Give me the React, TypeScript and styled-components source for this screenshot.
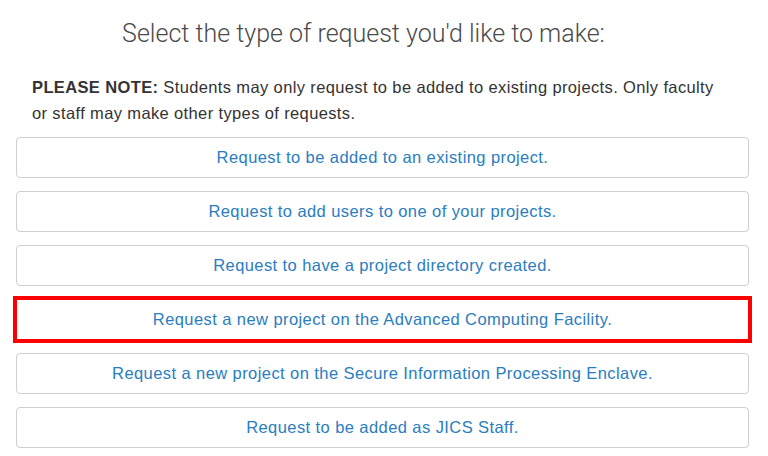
import React from "react";
import styled, { createGlobalStyle } from "styled-components";

const Global = createGlobalStyle`
  html, body { margin: 0; padding: 0; background: #ffffff; }
  body { font-family: "Liberation Sans", Arial, sans-serif; }
`;

const Page = styled.div`
  width: 768px;
  height: 456px;
  box-sizing: border-box;
  padding: 16px 19px 0 16px;
  display: flex;
  flex-direction: column;
  overflow: hidden;
`;

const Heading = styled.h2`
  margin: 0 38px 0 0;
  font-family: Roboto, "Liberation Sans", sans-serif;
  font-weight: 300;
  font-size: 25px;
  line-height: 36px;
  color: #4a4a4a;
  text-align: center;
`;

const Note = styled.p`
  margin: 22px 0 0 0;
  padding: 0 16px;
  font-size: 16.5px;
  letter-spacing: 0.37px;
  line-height: 26px;
  color: #333333;
`;

const List = styled.div`
  margin-top: 11px;
  display: flex;
  flex-direction: column;
  gap: 13px;
`;

const Option = styled.a<{ $highlight?: boolean }>`
  display: flex;
  align-items: center;
  justify-content: center;
  height: 41px;
  box-sizing: border-box;
  border: 1px solid #cfcfcf;
  border-radius: ${(p) => (p.$highlight ? "0" : "4px")};
  background: #ffffff;
  color: #2a7dc0;
  font-size: 16.5px;
  letter-spacing: 0.42px;
  text-decoration: none;
  cursor: pointer;
  outline: ${(p) => (p.$highlight ? "4px solid #ff0000" : "none")};
  outline-offset: -1px;
`;

const options = [
  "Request to be added to an existing project.",
  "Request to add users to one of your projects.",
  "Request to have a project directory created.",
  "Request a new project on the Advanced Computing Facility.",
  "Request a new project on the Secure Information Processing Enclave.",
  "Request to be added as JICS Staff.",
];

export default function App() {
  return (
    <>
      <Global />
      <Page>
        <Heading>Select the type of request you'd like to make:</Heading>
        <Note>
          <strong>PLEASE NOTE:</strong> Students may only request to be added to existing projects. Only faculty
          <br />
          or staff may make other types of requests.
        </Note>
        <List>
          {options.map((o, i) => (
            <Option key={o} $highlight={i === 3}>
              {o}
            </Option>
          ))}
        </List>
      </Page>
    </>
  );
}
